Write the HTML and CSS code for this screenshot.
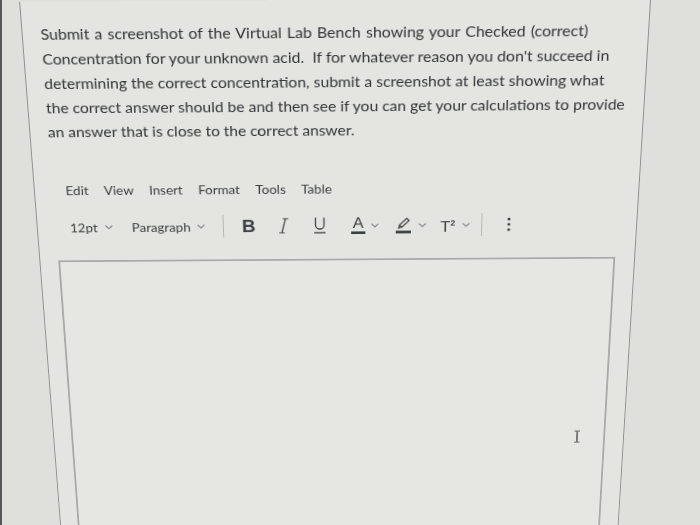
FILE: index.html
```html
<!DOCTYPE html>
<html>
<head>
<meta charset="utf-8">
<link rel="stylesheet" href="styles.css">
</head>
<body>
<div class="stage">
  <div class="panel">
    <p class="prompt"><span class="l1">Submit a screenshot of the Virtual Lab Bench showing your Checked (correct)</span><br>Concentration for your unknown acid.&nbsp; If for whatever reason you don't succeed in<br>determining the correct concentration, submit a screenshot at least showing what<br>the correct answer should be and then see if you can get your calculations to provide<br>an answer that is close to the correct answer.</p>

    <div class="menubar">
      <span>Edit</span><span>View</span><span>Insert</span><span>Format</span><span>Tools</span><span>Table</span>
    </div>

    <div class="toolbar">
      <div class="t-size">12pt<svg class="chev" viewBox="0 0 8 5"><polyline points="0.5,0.5 4,4 7.5,0.5"/></svg></div>
      <div class="t-para">Paragraph<svg class="chev" viewBox="0 0 8 5"><polyline points="0.5,0.5 4,4 7.5,0.5"/></svg></div>
      <div class="divider"></div>
      <div class="ic ic-b">B</div>
      <svg class="ic ic-i" viewBox="0 0 12 18"><path d="M5 1h6M1 17h6M8 1 4 17"/></svg>
      <svg class="ic ic-u" viewBox="0 0 14 20"><path d="M2.5 1v8.5a4.5 4.5 0 0 0 9 0V1"/><path class="fill" d="M1 17.5h12v1.5H1z"/></svg>
      <div class="ic ic-a"><span>A</span><i></i></div>
      <svg class="chev c1" viewBox="0 0 8 5"><polyline points="0.5,0.5 4,4 7.5,0.5"/></svg>
      <svg class="ic ic-pen" viewBox="0 0 16 20"><path d="M3 13.5l1-3.5 7.5-7.5 2.5 2.5-7.5 7.5z M4 10l2.5 2.5"/><path class="fill" d="M0 16.5h16v3H0z"/></svg>
      <svg class="chev c2" viewBox="0 0 8 5"><polyline points="0.5,0.5 4,4 7.5,0.5"/></svg>
      <div class="ic ic-t">T<sup>2</sup></div>
      <svg class="chev c3" viewBox="0 0 8 5"><polyline points="0.5,0.5 4,4 7.5,0.5"/></svg>
      <div class="divider d2"></div>
      <svg class="ic ic-more" viewBox="0 0 4 18"><circle cx="2" cy="3" r="1.6"/><circle cx="2" cy="9" r="1.6"/><circle cx="2" cy="15" r="1.6"/></svg>
    </div>

    <div class="editor">
      <svg class="ibeam" viewBox="0 0 8 16"><path d="M1 1h2.5q0.5 0 0.5 1v12q0 1-0.5 1H1M7 1H4.5q-0.5 0-0.5 1v12q0 1 0.5 1H7"/></svg>
    </div>
  </div>
</div>
</body>
</html>
```

FILE: styles.css
```css
html, body {
  margin: 0;
  padding: 0;
  width: 700px;
  height: 525px;
  overflow: hidden;
  background: #dfe0dc;
}

body {
  border-left: 2px solid #55575a;
  box-sizing: border-box;
  font-family: Lato, "Open Sans", sans-serif;
  color: #3a3c3e;
}

.stage {
  width: 700px;
  height: 720px;
  margin-left: -2px;
  transform-origin: 340px 0;
  transform: perspective(1000px) rotateX(-12.5deg) rotate(-0.4deg);
}

.panel {
  margin-left: 19px;
  width: 632px;
  height: 100%;
  border-left: 1px solid #8e9090;
  border-right: 1px solid #8e9090;
  box-sizing: border-box;
  background: #e4e5e1;
}

.prompt {
  margin: 0;
  padding: 20px 0 0 18px;
  font-size: 16px;
  line-height: 26px;
  white-space: nowrap;
  color: #333537;
}

.l1 {
  word-spacing: 1.1px;
}

.menubar {
  display: flex;
  gap: 16px;
  margin: 42px 0 0 32px;
  font-size: 14px;
  line-height: 20px;
  color: #3b3e41;
}

.toolbar {
  display: flex;
  align-items: center;
  height: 30px;
  margin: 16px 0 0 34px;
  font-size: 14px;
  color: #3b3e41;
}

.chev {
  flex: none;
  width: 8px;
  height: 5px;
  fill: none;
  stroke: #7d8083;
  stroke-width: 1.1;
}

.t-size {
  display: flex;
  align-items: center;
  width: 65px;
}

.t-size .chev { margin-left: 8px; }

.t-para {
  display: flex;
  align-items: center;
  width: 96px;
}

.t-para .chev { margin-left: 7px; }

.divider {
  flex: none;
  width: 1px;
  height: 26px;
  background: #b4b6b6;
}

.ic {
  flex: none;
  fill: none;
  stroke: #3d4043;
  stroke-width: 1.4;
}

.ic .fill {
  fill: #3d4043;
  stroke: none;
}

.ic-b {
  margin-left: 19px;
  width: 16px;
  font-family: "Liberation Sans", Arial, sans-serif;
  font-weight: bold;
  font-size: 20px;
  line-height: 22px;
  color: #3d4043;
}

.ic-i {
  margin-left: 22px;
  width: 12px;
  height: 18px;
  stroke-width: 1.2;
}

.ic-u {
  margin-left: 25px;
  width: 14px;
  height: 20px;
  stroke-width: 1.3;
}

.ic-a {
  margin-left: 26px;
  width: 15px;
  display: flex;
  flex-direction: column;
  align-items: center;
}

.ic-a span {
  font-family: "Liberation Sans", Arial, sans-serif;
  font-size: 17px;
  line-height: 16px;
  color: #3d4043;
}

.ic-a i {
  display: block;
  width: 15px;
  height: 3px;
  margin-top: 1px;
  background: #3d4043;
}

.c1 { margin-left: 6px; }

.ic-pen {
  margin-left: 18px;
  width: 16px;
  height: 20px;
  stroke-width: 1.3;
}

.c2 { margin-left: 8px; }

.ic-t {
  margin-left: 15px;
  width: 16px;
  font-family: "Liberation Sans", Arial, sans-serif;
  font-size: 17px;
  line-height: 20px;
  color: #3d4043;
}

.ic-t sup {
  font-size: 9px;
  vertical-align: 7px;
  font-weight: bold;
}

.c3 { margin-left: 7px; }

.d2 { margin-left: 12px; }

.ic-more {
  margin-left: 26px;
  width: 4px;
  height: 18px;
  fill: #3d4043;
  stroke: none;
}

.editor {
  position: relative;
  margin: 23px 0 0 19px;
  width: 591px;
  height: 500px;
  border: 2px solid #a9abab;
  box-sizing: border-box;
  background: #e6e7e3;
}

.ibeam {
  position: absolute;
  left: 554px;
  top: 206px;
  width: 8px;
  height: 16px;
  fill: none;
  stroke: #4a4c4e;
  stroke-width: 1;
}
```
